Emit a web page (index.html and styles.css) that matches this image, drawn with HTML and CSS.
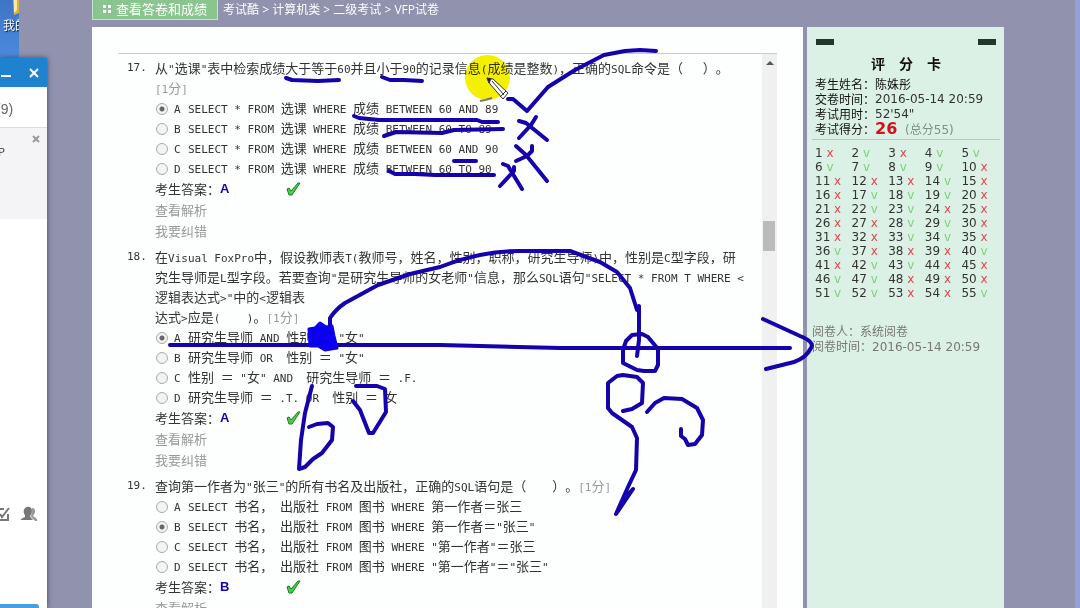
FILE: index.html
```html
<!DOCTYPE html>
<html lang="zh-CN">
<head>
  <meta charset="UTF-8">
  <meta name="viewport" content="width=device-width, initial-scale=1.0">
  <title>查看答卷和成绩</title>
  <link rel="stylesheet" href="styles.css">
</head>
<body>
  <div class="desktop">
    <svg class="folder" viewBox="0 0 6 16" aria-hidden="true">
      <path d="M0 0h6v13L1 15z" fill="#d9b14a"/>
      <path d="M1 0h3v10L1 13z" fill="#fbe9a4"/>
    </svg>
    <span class="desktop-label">我的</span>
  </div>

  <div class="page">
    <header class="topbar">
      <h1 class="tab"><span class="dots"><i></i><i></i><i></i><i></i></span>查看答卷和成绩</h1>
      <nav class="crumbs">
        <a href="#">考试酷</a> &gt; <a href="#">计算机类</a> &gt; <a href="#">二级考试</a> &gt; <a href="#">VFP试卷</a>
      </nav>
    </header>

    <div class="columns">
      <main class="paper">
        <div class="scroller">
          <div class="questions">
            <section class="question">
              <code class="num">17.</code>
              <div class="body">
                <p>从<code>"</code>选课<code>"</code>表中检索成绩大于等于<code>60</code>并且小于<code>90</code>的记录信息<code>(</code>成绩是整数<code>)</code>，正确的<code>SQL</code>命令是（　<code> </code>）。<br><span class="points"><code>[1</code>分<code>]</code></span></p>
                <label><input type="radio" name="q17" checked><code class="key">A</code><code>SELECT * FROM </code>选课<code> WHERE </code>成绩<code> BETWEEN 60 AND 89</code></label>
                <label><input type="radio" name="q17"><code class="key">B</code><code>SELECT * FROM </code>选课<code> WHERE </code>成绩<code> BETWEEN 60 TO 89</code></label>
                <label><input type="radio" name="q17"><code class="key">C</code><code>SELECT * FROM </code>选课<code> WHERE </code>成绩<code> BETWEEN 60 AND 90</code></label>
                <label><input type="radio" name="q17"><code class="key">D</code><code>SELECT * FROM </code>选课<code> WHERE </code>成绩<code> BETWEEN 60 TO 90</code></label>
                <div class="answer">考生答案：<b>A</b><svg class="tick" viewBox="0 0 15 14"><path d="M1 7l2-1 2 3 7-8 2 0L6 13H3z"/></svg></div>
                <a class="more" href="#">查看解析</a>
                <a class="more" href="#">我要纠错</a>
              </div>
            </section>

            <section class="question">
              <code class="num">18.</code>
              <div class="body">
                <p>在<code>Visual FoxPro</code>中，假设教师表<code>T(</code>教师号，姓名，性别，职称，研究生导师<code>)</code>中，性别是<code>C</code>型字段，研<br>究生导师是<code>L</code>型字段。若要查询<code>"</code>是研究生导师的女老师<code>"</code>信息，那么<code>SQL</code>语句<code>"SELECT * FROM T WHERE &lt;</code><br>逻辑表达式<code>&gt;"</code>中的<code>&lt;</code>逻辑表<br>达式<code>&gt;</code>应是<code>(    )</code>。<span class="points"><code>[1</code>分<code>]</code></span></p>
                <label><input type="radio" name="q18" checked><code class="key">A</code>研究生导师<code> AND </code>性别<code> </code>＝<code> "</code>女<code>"</code></label>
                <label><input type="radio" name="q18"><code class="key">B</code>研究生导师<code> OR  </code>性别<code> </code>＝<code> "</code>女<code>"</code></label>
                <label><input type="radio" name="q18"><code class="key">C</code>性别<code> </code>＝<code> "</code>女<code>" AND  </code>研究生导师<code> </code>＝<code> .F.</code></label>
                <label><input type="radio" name="q18"><code class="key">D</code>研究生导师<code> </code>＝<code> .T. OR  </code>性别<code> </code>＝<code> </code>女</label>
                <div class="answer">考生答案：<b>A</b><svg class="tick" viewBox="0 0 15 14"><path d="M1 7l2-1 2 3 7-8 2 0L6 13H3z"/></svg></div>
                <a class="more" href="#">查看解析</a>
                <a class="more" href="#">我要纠错</a>
              </div>
            </section>

            <section class="question">
              <code class="num">19.</code>
              <div class="body">
                <p>查询第一作者为<code>"</code>张三<code>"</code>的所有书名及出版社，正确的<code>SQL</code>语句是（　　）。<span class="points"><code>[1</code>分<code>]</code></span></p>
                <label><input type="radio" name="q19"><code class="key">A</code><code>SELECT </code>书名，<code> </code>出版社<code> FROM </code>图书<code> WHERE </code>第一作者＝张三</label>
                <label><input type="radio" name="q19" checked><code class="key">B</code><code>SELECT </code>书名，<code> </code>出版社<code> FROM </code>图书<code> WHERE </code>第一作者＝<code>"</code>张三<code>"</code></label>
                <label><input type="radio" name="q19"><code class="key">C</code><code>SELECT </code>书名，<code> </code>出版社<code> FROM </code>图书<code> WHERE "</code>第一作者<code>"</code>＝张三</label>
                <label><input type="radio" name="q19"><code class="key">D</code><code>SELECT </code>书名，<code> </code>出版社<code> FROM </code>图书<code> WHERE "</code>第一作者<code>"</code>＝<code>"</code>张三<code>"</code></label>
                <div class="answer">考生答案：<b>B</b><svg class="tick" viewBox="0 0 15 14"><path d="M1 7l2-1 2 3 7-8 2 0L6 13H3z"/></svg></div>
                <a class="more" href="#">查看解析</a>
              </div>
            </section>
          </div>
          <div class="scrollbar"><span class="arrow"></span><span class="thumb"></span></div>
        </div>
      </main>

      <aside class="card">
        <div class="marks"><i></i><i></i></div>
        <h2>评　分　卡</h2>
        <dl>
          <div><dt>考生姓名：</dt><dd class="name">陈姝彤</dd></div>
          <div><dt>交卷时间：</dt><dd>2016-05-14 20:59</dd></div>
          <div><dt>考试用时：</dt><dd>52'54"</dd></div>
          <div><dt>考试得分：</dt><dd><b class="score">26</b> <span class="total">(总分55)</span></dd></div>
        </dl>
        <table class="results">
          <tr><td>1 <i class="x">x</i></td><td>2 <i>v</i></td><td>3 <i class="x">x</i></td><td>4 <i>v</i></td><td>5 <i>v</i></td></tr>
          <tr><td>6 <i>v</i></td><td>7 <i>v</i></td><td>8 <i>v</i></td><td>9 <i>v</i></td><td>10 <i class="x">x</i></td></tr>
          <tr><td>11 <i class="x">x</i></td><td>12 <i class="x">x</i></td><td>13 <i class="x">x</i></td><td>14 <i>v</i></td><td>15 <i class="x">x</i></td></tr>
          <tr><td>16 <i class="x">x</i></td><td>17 <i>v</i></td><td>18 <i>v</i></td><td>19 <i>v</i></td><td>20 <i class="x">x</i></td></tr>
          <tr><td>21 <i class="x">x</i></td><td>22 <i>v</i></td><td>23 <i>v</i></td><td>24 <i class="x">x</i></td><td>25 <i class="x">x</i></td></tr>
          <tr><td>26 <i class="x">x</i></td><td>27 <i class="x">x</i></td><td>28 <i>v</i></td><td>29 <i>v</i></td><td>30 <i class="x">x</i></td></tr>
          <tr><td>31 <i class="x">x</i></td><td>32 <i class="x">x</i></td><td>33 <i>v</i></td><td>34 <i>v</i></td><td>35 <i class="x">x</i></td></tr>
          <tr><td>36 <i>v</i></td><td>37 <i class="x">x</i></td><td>38 <i class="x">x</i></td><td>39 <i class="x">x</i></td><td>40 <i>v</i></td></tr>
          <tr><td>41 <i class="x">x</i></td><td>42 <i>v</i></td><td>43 <i>v</i></td><td>44 <i class="x">x</i></td><td>45 <i class="x">x</i></td></tr>
          <tr><td>46 <i>v</i></td><td>47 <i>v</i></td><td>48 <i class="x">x</i></td><td>49 <i class="x">x</i></td><td>50 <i class="x">x</i></td></tr>
          <tr><td>51 <i>v</i></td><td>52 <i>v</i></td><td>53 <i class="x">x</i></td><td>54 <i class="x">x</i></td><td>55 <i>v</i></td></tr>
        </table>
        <p class="reviewer">阅卷人：系统阅卷<br>阅卷时间：2016-05-14 20:59</p>
      </aside>
    </div>
  </div>

  <!-- chat window, mostly off the left edge -->
  <div class="chat">
    <div class="chat-bar">
      <button aria-label="最小化"><svg viewBox="0 0 12 12"><path d="M1 9h10"/></svg></button>
      <button aria-label="关闭"><svg viewBox="0 0 12 12"><path d="M2 2l8 8M10 2l-8 8"/></svg></button>
    </div>
    <div class="chat-count">(9)</div>
    <div class="chat-item">
      <button aria-label="移除"><svg viewBox="0 0 12 12"><path d="M3 3l6 6M9 3l-6 6"/></svg></button>
      <span>P</span>
    </div>
    <div class="chat-tools">
      <svg viewBox="0 0 16 16"><path d="M2 3h7M13 8v6H2M5 8l2 3 7-9" fill="none" stroke="#777" stroke-width="2"/></svg>
      <svg viewBox="0 0 16 16"><path d="M6 1c3-1 5 1 5 4 0 2-1 4-2 5l1 2 2 2H0c0-2 3-2 4-3V9C2 7 2 2 6 1z" fill="#777"/><path d="M11 2c4 0 4 5 1 8l4 3v2h-2l-4-4" fill="#999"/></svg>
    </div>
    <button class="chat-send" aria-label="发送"></button>
  </div>

  <!-- pen strokes over the page -->
  <div class="glow"></div>
  <svg class="ink" viewBox="0 0 1080 608" aria-hidden="true">
    <g class="pen">
      <path d="M286 78l6 2 26 1 21-1"/>
      <path d="M382 77l8 3 14 0 18 1"/>
      <path d="M354 116l5 2 20 2h98l5 2h16"/>
      <path d="M384 136l12-4 46 1 12-3 49-1"/>
      <path d="M454 161h22M389 171l6 3 20 0 20 1h59"/>
      <path d="M508 99l5 0 14 12 21-24 27-17 29-15 21-4 15-1 16 1"/>
      <path d="M519 121l7 2 21 17M536 117l-5 8-12 13"/>
      <path d="M516 146l10 9 21 26M532 146l0 5-5 5-11 5"/>
      <path d="M503 164l5 2 14 23M514 167l0 4-14 15"/>
      <path d="M330 340v-22q6-9 15-15l33-18 32-11 30-7q20-8 40-12 20-4 40-4h50l30 11 17 10 13 16 7 22 2-4v34l-2 16"/>
      <path d="M170 345h270l120 3 230 0"/>
      <path d="M632 335l-6 6-3 9v13l14 7 7 1h11l3-6v-16l-10-12-6-3-10 1z"/>
      <path d="M763 319l37 17q15 6 11 12-5 10-17 14l-12 3-16 4"/>
      <path d="M312 386l-7 27-4 27-2 29 6-2 8-8 9-6 10-13 1-13-5-4-11 1-8 3"/>
      <path d="M356 386h21l8 3 1 23-13 21h-4l-9-23-7-9"/>
      <path d="M623 411l9-2 10-6 1-20-6-6-14-2-6 1-9 7v25l4 5 20 14 5 11-1 32-8 17-12 27 17-25-9 10"/>
      <path d="M647 412l8-9 9-5 18 1 15 9 6 12-1 15-7 9-7 1-3-6-4-3 0-7"/>
    </g>
    <path class="blob" d="M309 329l6-1 5-5 6 4 6-1 2 10 3 12-12 2-7-4-8 0z"/>
    <path d="M480 101l5-1 7-2" fill="none" stroke="#777" stroke-width="2"/>
    <path d="M487 78l6 1 15 14-5 6-13-15z" fill="#fff" stroke="#333"/>
    <path d="M487 78l4 1-2 4zM492 81l12 14M500 97l6-6" fill="#222" stroke="#333"/>
  </svg>
</body>
</html>
```
FILE: styles.css
```css
:root {
  --bg: #9092ae;
  --ink: #1403ad;
  --cjk: "Noto Sans CJK SC", sans-serif;
  --mono: "DejaVu Sans Mono", "Liberation Mono", monospace;
}
* { box-sizing: border-box; }
body {
  margin: 0;
  height: 100vh;
  overflow: hidden;
  display: flex;
  position: relative;
  background: var(--bg);
  font-family: var(--cjk);
  font-size: 13px;
  text-spacing-trim: space-all;
  color: #333;
}
h1, h2, p, dl, dd { margin: 0; }
i { font-style: normal; }
a { color: inherit; text-decoration: none; }
button { border: none; padding: 0; background: none; }

/* desktop strip */
.desktop {
  width: 19px;
  flex: none;
  overflow: hidden;
  background: linear-gradient(#3f74c4, #4b8be0 60px);
  color: #fff;
}
.folder {
  display: block;
  width: 6px;
  height: 16px;
  margin-left: 13px;
}
.desktop-label {
  display: block;
  margin-left: 3px;
  font-size: 12px;
  line-height: 18px;
  white-space: nowrap;
  text-shadow: 1px 1px 1px #123;
}

/* page */
.page {
  flex: 1;
  min-width: 0;
  display: flex;
  flex-direction: column;
  padding: 0 71px 0 73px;
  border-right: 5px solid #8fa4d4;
}
.topbar {
  display: flex;
  height: 27px;
  flex: none;
  color: #fff;
}
.tab {
  display: flex;
  align-items: center;
  gap: 5px;
  height: 20px;
  padding: 0 10px 2px;
  border: 1px solid #c4e2cc;
  border-top: none;
  background: #8ac58f;
  font-size: 13px;
  line-height: 18px;
  font-weight: 400;
}
.dots {
  display: grid;
  grid-template-columns: 3px 3px;
  gap: 2px;
}
.dots i {
  height: 3px;
  background: #fff;
}
.crumbs {
  padding-left: 5px;
  font-family: "Open Sans", "Noto Sans CJK SC", sans-serif;
  font-size: 12px;
  line-height: 19px;
}
.columns {
  flex: 1;
  min-height: 0;
  display: flex;
  gap: 4px;
}
.paper {
  flex: 1;
  min-width: 0;
  display: flex;
  padding: 26px 26px 0;
  background: #fdfefe;
}
.scroller {
  flex: 1;
  min-width: 0;
  display: flex;
  border-top: 1px solid #ccc;
}
.questions {
  flex: 1;
  min-width: 0;
  overflow: hidden;
  padding: 4px 0 0 9px;
}
.question {
  display: flex;
  margin-bottom: 6px;
  line-height: 20px;
  white-space: nowrap;
}
code {
  font-family: var(--mono);
  font-size: 11px;
  line-height: 11px;
  white-space: pre;
}
.num {
  width: 28px;
  flex: none;
  line-height: 20px;
}
.points { color: #999; }
label {
  display: block;
  height: 20px;
}
input[type="radio"] {
  appearance: none;
  width: 12px;
  height: 12px;
  margin: 0 6px 0 1px;
  border: 1px solid #aaa;
  border-radius: 50%;
  background: #f3f3f3;
  vertical-align: -2px;
}
input[type="radio"]:checked {
  background: radial-gradient(circle, #666 0 2px, #f3f3f3 3px);
}
.key {
  display: inline-block;
  width: 14px;
}
.answer {
  display: flex;
  align-items: center;
  height: 21px;
}
.answer b {
  width: 9px;
  font-family: "Liberation Sans", sans-serif;
  color: var(--ink);
}
.tick {
  width: 15px;
  height: 14px;
  margin-left: 57px;
  fill: #4ccc4c;
  stroke: #18801c;
}
.more {
  display: block;
  line-height: 21px;
  color: #999;
}
.scrollbar {
  position: relative;
  width: 15px;
  flex: none;
  background: #f0f0f0;
}
.arrow {
  position: absolute;
  left: 4px;
  top: 7px;
  border: 4px solid transparent;
  border-top: none;
  border-bottom-color: #555;
}
.thumb {
  position: absolute;
  left: 1px;
  top: 167px;
  width: 12px;
  height: 30px;
  background: #bbb;
}

/* score card */
.card {
  width: 197px;
  flex: none;
  padding: 12px 4px 0 5px;
  background: #dcf1e5;
  font-family: "DejaVu Sans", "Noto Sans CJK SC", sans-serif;
  font-size: 12px;
}
.marks {
  display: flex;
  justify-content: space-between;
  padding: 0 4px;
}
.marks i {
  width: 18px;
  height: 6px;
  background: #22372c;
}
.card h2 {
  padding: 9px 0 2px;
  font-size: 14px;
  line-height: 20px;
  text-align: center;
  color: #111;
}
.card dl {
  padding: 0 0 3px 3px;
  border-bottom: 1px solid #b4c8bc;
}
.card dl div {
  display: flex;
  height: 15px;
  align-items: center;
}
.card dt { color: #111; }
.name { color: #111; }
.score {
  font-size: 16px;
  line-height: 15px;
  color: #d4101c;
}
.total {
  margin-left: 4px;
  color: #7d8f85;
}
.results {
  width: 183px;
  margin: 6px 0 0 3px;
  border-collapse: collapse;
  table-layout: fixed;
}
.results td {
  height: 14px;
  padding: 0;
  line-height: 14px;
  white-space: nowrap;
}
.results i { color: #7ed07c; }
.results .x { color: #dc4a52; }
.reviewer {
  margin-top: 25px;
  line-height: 15px;
  color: #777;
}

/* chat window */
.chat {
  position: absolute;
  left: 0;
  top: 58px;
  bottom: 0;
  width: 47px;
  display: flex;
  flex-direction: column;
  background: #fff;
  box-shadow: 0 0 5px #445;
}
.chat svg {
  display: block;
  width: 12px;
  height: 12px;
  fill: none;
  stroke: #999;
  stroke-width: 2;
}
.chat-bar {
  display: flex;
  align-items: center;
  justify-content: space-between;
  height: 29px;
  padding: 0 7px 0 0;
  background: #1e82cf;
}
.chat .chat-bar svg { stroke: #fff; }
.chat-count {
  height: 41px;
  border-bottom: 1px solid #ddd;
  line-height: 44px;
  font-family: "Liberation Sans", sans-serif;
  font-size: 14px;
  text-indent: -4px;
  color: #666;
}
.chat-item {
  height: 91px;
  padding: 5px 5px 0 0;
  background: #f4f4f6;
}
.chat-item button {
  display: block;
  margin-left: auto;
}
.chat-item span {
  display: block;
  font-size: 11px;
  line-height: 13px;
  text-indent: -2px;
}
.chat-tools {
  display: flex;
  justify-content: space-between;
  margin-top: auto;
  padding: 0 10px 0 0;
}
.chat .chat-tools svg {
  width: 16px;
  height: 16px;
  margin-left: -5px;
  stroke: none;
}
.chat-send {
  width: 39px;
  height: 4px;
  margin-top: 82px;
  border-radius: 0 3px 0 0;
  background: #4a9fe0;
}

/* pen */
.glow {
  position: absolute;
  left: 465px;
  top: 55px;
  width: 45px;
  height: 45px;
  border-radius: 50%;
  background: #f6f200;
  mix-blend-mode: multiply;
}
.ink {
  position: absolute;
  left: 0;
  top: 0;
  width: 1080px;
  height: 608px;
  pointer-events: none;
}
.pen {
  fill: none;
  stroke: var(--ink);
  stroke-width: 4;
  stroke-linecap: round;
  stroke-linejoin: round;
}
.blob {
  fill: #0b00ee;
  stroke: #0b00ee;
  stroke-width: 3;
  stroke-linejoin: round;
}
```
